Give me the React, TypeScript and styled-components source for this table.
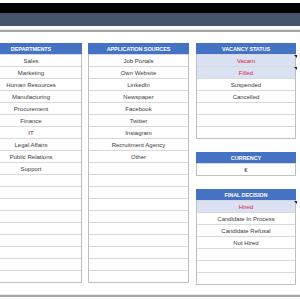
import styled, { createGlobalStyle } from 'styled-components';

const GlobalStyle = createGlobalStyle`
	html, body {
		margin: 0;
		padding: 0;
		background: #ffffff;
		overflow: hidden;
	}
	body {
		font-family: 'Liberation Sans', Arial, sans-serif;
		color: #262626;
	}
`;

type ListData = {
	title: string;
	items: string[];
	rows: number;
	marked?: number; // how many of the first items are highlighted
};

const departments: ListData = {
	title: 'DEPARTMENTS',
	items: [
		'Sales',
		'Marketing',
		'Human Resources',
		'Manufacturing',
		'Procurement',
		'Finance',
		'IT',
		'Legal Affairs',
		'Public Relations',
		'Support',
	],
	rows: 19,
};

const sources: ListData = {
	title: 'APPLICATION SOURCES',
	items: [
		'Job Portals',
		'Own Website',
		'LinkedIn',
		'Newspaper',
		'Facebook',
		'Twitter',
		'Instagram',
		'Recruitment Agency',
		'Other',
	],
	rows: 19,
};

const vacancy: ListData = {
	title: 'VACANCY STATUS',
	items: ['Vacant', 'Filled', 'Suspended', 'Cancelled'],
	rows: 7,
	marked: 2,
};

const currency: ListData = {
	title: 'CURRENCY',
	items: ['€'],
	rows: 1,
};

const decision: ListData = {
	title: 'FINAL DECISION',
	items: ['Hired', 'Candidate In Process', 'Candidate Refusal', 'Not Hired'],
	rows: 7,
	marked: 1,
};

const Page = styled.div`
	width: 300px;
	height: 300px;
	padding-top: 3px;
	box-sizing: border-box;
	display: flex;
	flex-direction: column;
`;

const BlackBar = styled.div`
	height: 10px;
	background: #000000;
`;

const TitleBar = styled.div`
	height: 13px;
	background: #44546a;
`;

const Rule = styled.div<{ $top: number }>`
	margin-top: ${(p) => p.$top}px;
	height: 2px;
	border-top: 1px solid #e4e4e4;
	background: #a6a6a6;
`;

const Board = styled.div`
	display: grid;
	grid-template-columns: 102px 101px 101px;
	column-gap: 6px;
	margin-left: -20px;
	margin-top: 11px;
	align-items: start;
`;

const Stack = styled.div`
	display: flex;
	flex-direction: column;
	gap: 13px;
	margin-left: 1px;
`;

const Table = styled.div`
	display: flex;
	flex-direction: column;
	border: 1px solid #bfbfbf;
	border-top: none;
`;

const Header = styled.div`
	height: 11px;
	background: #4472c4;
	color: #ffffff;
	font-size: 5.5px;
	font-weight: 700;
	display: flex;
	align-items: center;
	justify-content: center;
	margin: 0 -1px;
	letter-spacing: -0.1px;
`;

const Row = styled.div<{ $marked?: boolean }>`
	position: relative;
	height: 12px;
	box-sizing: border-box;
	border-top: 1px solid #d9d9d9;
	background: ${(p) => (p.$marked ? '#d9e1f2' : '#ffffff')};
	color: ${(p) => (p.$marked ? '#e2233f' : '#3a3a3a')};
	font-size: 6px;
	display: flex;
	align-items: center;
	justify-content: center;
	white-space: nowrap;

	&:first-of-type {
		border-top: none;
	}
`;

const Marker = styled.span`
	position: absolute;
	top: 0;
	right: -2px;
	width: 0;
	height: 0;
	border-left: 3px solid transparent;
	border-top: 3px solid #1f1f1f;
`;

const List: React.FC<{ data: ListData }> = ({ data }) => {
	const cells = Array.from({ length: data.rows }, (_, i) => data.items[i] ?? '');
	return (
		<Table>
			<Header>{data.title}</Header>
			{cells.map((text, i) => {
				const marked = i < (data.marked ?? 0);
				return (
					<Row key={i} $marked={marked}>
						{text}
						{marked && <Marker />}
					</Row>
				);
			})}
		</Table>
	);
};

const App: React.FC = () => {
	return (
		<>
			<GlobalStyle />
			<Page>
				<BlackBar />
				<TitleBar />
				<Rule $top={3} />
				<Board>
					<List data={departments} />
					<List data={sources} />
					<Stack>
						<List data={vacancy} />
						<List data={currency} />
						<List data={decision} />
					</Stack>
				</Board>
				<Rule $top={9} />
			</Page>
		</>
	);
};

export default App;
